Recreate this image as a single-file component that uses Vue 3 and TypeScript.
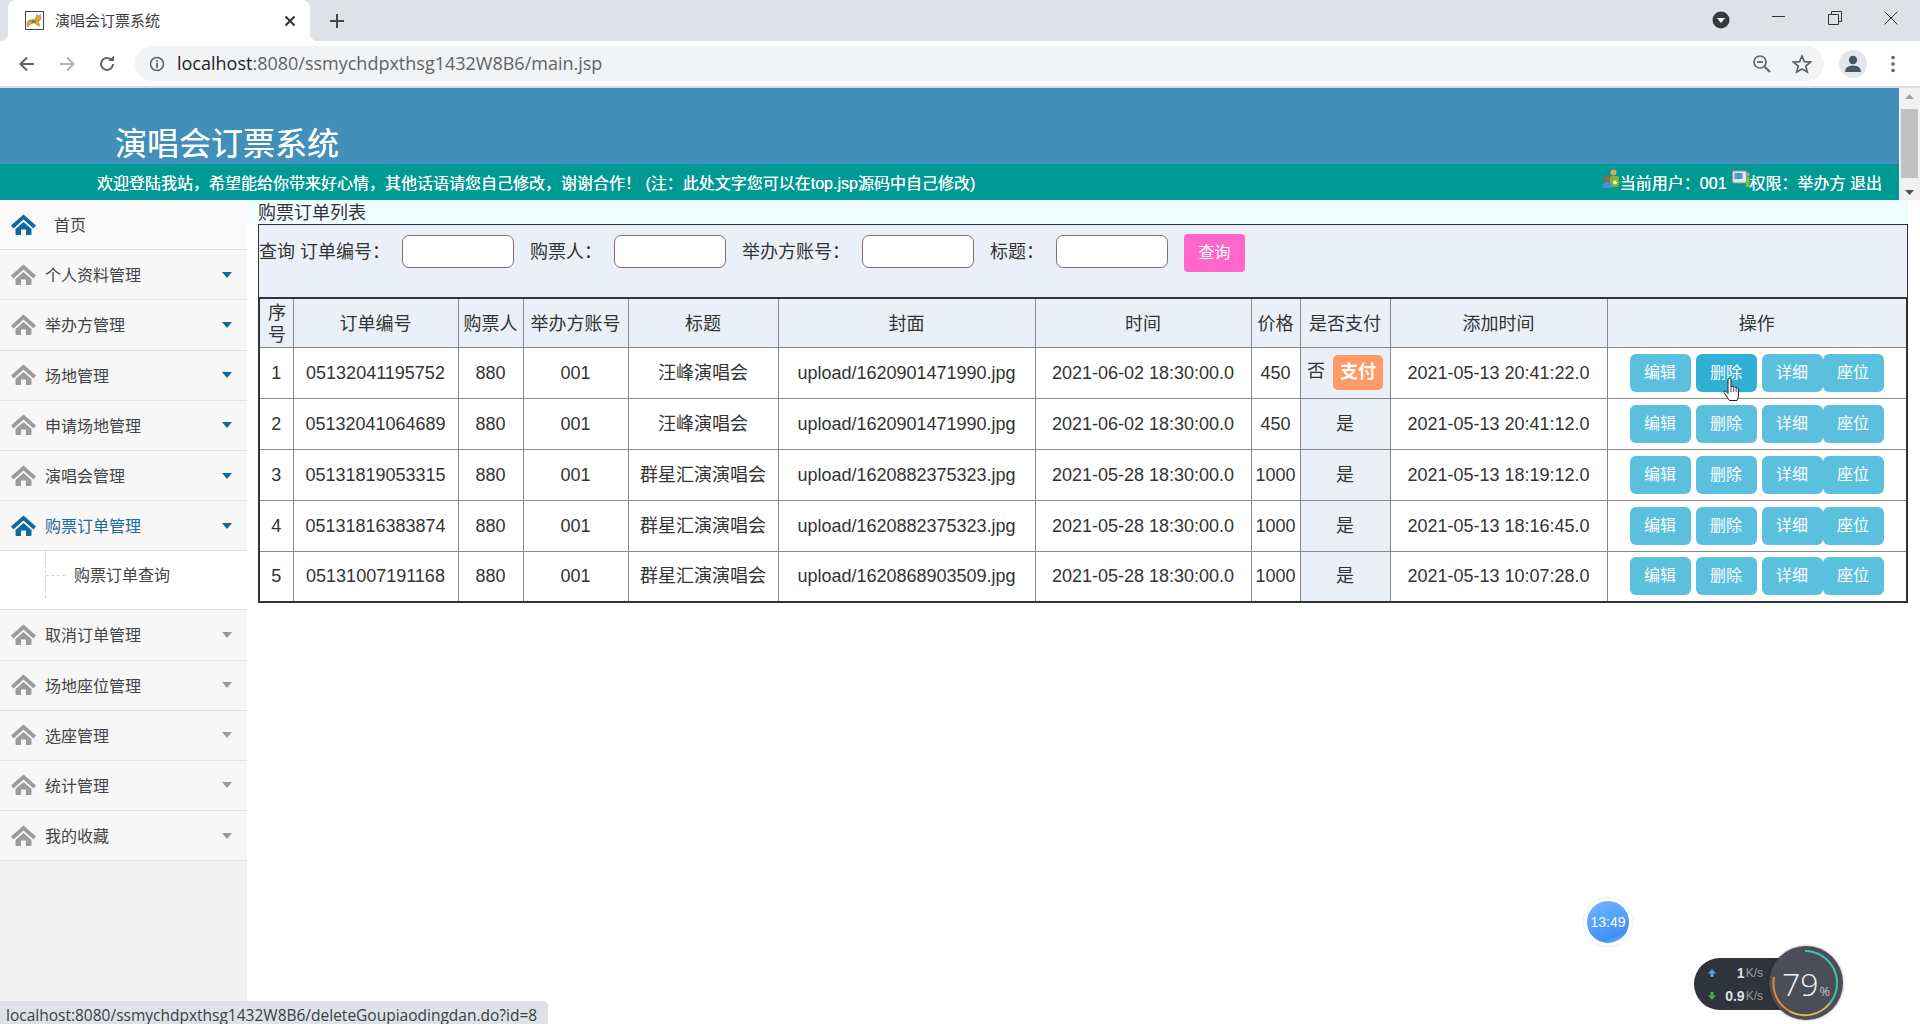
<script setup lang="ts">
interface Order {
  no: number
  code: string
  title: string
  cover: string
  time: string
  price: string
  paid: boolean
  added: string
}
const menus = ['个人资料管理', '举办方管理', '场地管理', '申请场地管理', '演唱会管理']
const menusAfter = ['取消订单管理', '场地座位管理', '选座管理', '统计管理', '我的收藏']
const headers = ['序号', '订单编号', '购票人', '举办方账号', '标题', '封面', '时间', '价格', '是否支付', '添加时间', '操作']
const widths = [34, 165, 65, 105, 150, 257, 216, 49, 90, 217, 300]
const orders: Order[] = [
  { no: 1, code: '05132041195752', title: '汪峰演唱会', cover: 'upload/1620901471990.jpg', time: '2021-06-02 18:30:00.0', price: '450', paid: false, added: '2021-05-13 20:41:22.0' },
  { no: 2, code: '05132041064689', title: '汪峰演唱会', cover: 'upload/1620901471990.jpg', time: '2021-06-02 18:30:00.0', price: '450', paid: true, added: '2021-05-13 20:41:12.0' },
  { no: 3, code: '05131819053315', title: '群星汇演演唱会', cover: 'upload/1620882375323.jpg', time: '2021-05-28 18:30:00.0', price: '1000', paid: true, added: '2021-05-13 18:19:12.0' },
  { no: 4, code: '05131816383874', title: '群星汇演演唱会', cover: 'upload/1620882375323.jpg', time: '2021-05-28 18:30:00.0', price: '1000', paid: true, added: '2021-05-13 18:16:45.0' },
  { no: 5, code: '05131007191168', title: '群星汇演演唱会', cover: 'upload/1620868903509.jpg', time: '2021-05-28 18:30:00.0', price: '1000', paid: true, added: '2021-05-13 10:07:28.0' },
]
const housePath = 'M12.5 0.5 L25 11.5 L22.5 14.5 L12.5 5.5 L2.5 14.5 L0 11.5 Z M4.5 15 L12.5 8 L20.5 15 V20 Q20.5 21 19.5 21 H15 V15.5 H10 V21 H5.5 Q4.5 21 4.5 20 Z'
</script>

<template>
  <div class="app">
    <div class="tabstrip">
      <div class="tab">
        <svg class="favicon" width="19" height="19" viewBox="0 0 19 19">
          <rect x="0.5" y="0.5" width="18" height="18" fill="#fff" stroke="#444" />
          <path d="M2 15 Q1.5 10 4.5 9 L10 8.5 L12 3.5 L13.5 5 L15.5 3.5 L16 8 L13 11 L15 14.5 L12.5 14.5 L10 12 L6 12.5 L4 14.5 L3 16 Z" fill="#d9a441" stroke="#9a6a28" stroke-width="0.5" />
          <path d="M6 10 L10 9.5 L11 11 L7 11.5 Z" fill="#6e5a30" />
        </svg>
        <span class="tab-title">演唱会订票系统</span>
        <svg class="tab-x" width="12" height="12" viewBox="0 0 12 12"><path d="M1.5 1.5 L10.5 10.5 M10.5 1.5 L1.5 10.5" stroke="#333" stroke-width="2" /></svg>
      </div>
      <svg class="plus" width="16" height="16" viewBox="0 0 16 16"><path d="M8 1 V15 M1 8 H15" stroke="#45474a" stroke-width="2" /></svg>
      <div class="winctl">
        <svg class="media" width="18" height="18" viewBox="0 0 18 18"><circle cx="9" cy="9" r="8.5" fill="#36393d" /><path d="M5 7 H13 L9 12 Z" fill="#fff" /></svg>
        <svg class="win" width="14" height="14" viewBox="0 0 14 14"><path d="M0 5.5 H13" stroke="#333" stroke-width="1" /></svg>
        <svg class="win" width="14" height="14" viewBox="0 0 14 14"><path d="M0.5 3.5 H10.5 V13.5 H0.5 Z M3.5 3.5 V0.5 H13.5 V10.5 H10.5" fill="none" stroke="#333" /></svg>
        <svg class="win" width="14" height="14" viewBox="0 0 14 14"><path d="M0.5 0.5 L13.5 13.5 M13.5 0.5 L0.5 13.5" stroke="#333" /></svg>
      </div>
    </div>

    <div class="toolbar">
      <svg class="nav" width="18" height="18" viewBox="0 0 18 18"><path d="M16 9 H3 M9 2.5 L2.5 9 L9 15.5" fill="none" stroke="#5f6368" stroke-width="2" /></svg>
      <svg class="nav" width="18" height="18" viewBox="0 0 18 18"><path d="M2 9 H15 M9 2.5 L15.5 9 L9 15.5" fill="none" stroke="#b4b6b9" stroke-width="2" /></svg>
      <svg class="nav" width="18" height="18" viewBox="0 0 18 18"><path d="M15 9 A6 6 0 1 1 13 4.5" fill="none" stroke="#5f6368" stroke-width="2" /><path d="M10 6 H16 V0.5 Z" fill="#5f6368" /></svg>
      <div class="omnibox">
        <svg width="16" height="16" viewBox="0 0 16 16"><circle cx="8" cy="8" r="6.5" fill="none" stroke="#5f6368" stroke-width="1.6" /><path d="M8 7 V12 M8 4 V5.8" stroke="#5f6368" stroke-width="1.8" /></svg>
        <span class="url"><span class="host">localhost</span>:8080/ssmychdpxthsg1432W8B6/main.jsp</span>
        <svg class="om-zoom" width="20" height="20" viewBox="0 0 20 20"><circle cx="8" cy="8" r="6" fill="none" stroke="#5f6368" stroke-width="1.7" /><path d="M5 8 H11" stroke="#5f6368" stroke-width="1.7" /><path d="M12.5 12.5 L18 18" stroke="#5f6368" stroke-width="2" /></svg>
        <svg class="om-star" width="20" height="20" viewBox="0 0 20 20"><path d="M10 2 L12.4 7.6 L18.5 8.1 L13.8 12.1 L15.3 18 L10 14.9 L4.7 18 L6.2 12.1 L1.5 8.1 L7.6 7.6 Z" fill="none" stroke="#5f6368" stroke-width="1.7" /></svg>
      </div>
      <div class="avatar">
        <svg width="18" height="18" viewBox="0 0 18 18"><circle cx="9" cy="5" r="4.2" fill="#4a5568" /><path d="M1 17 Q1 10.5 9 10.5 Q17 10.5 17 17 Z" fill="#4a5568" /></svg>
      </div>
      <svg class="kebab" width="6" height="18" viewBox="0 0 6 18"><circle cx="3" cy="2.5" r="1.8" fill="#5f6368" /><circle cx="3" cy="9" r="1.8" fill="#5f6368" /><circle cx="3" cy="15.5" r="1.8" fill="#5f6368" /></svg>
    </div>

    <div class="topframe">
      <div class="topcontent">
        <div class="brand"><span class="brand-text">演唱会订票系统</span></div>
        <div class="notice">
          <span class="notice-left">欢迎登陆我站，希望能给你带来好心情，其他话语请您自己修改，谢谢合作！ (注：此处文字您可以在top.jsp源码中自己修改)</span>
          <span class="notice-right">
            <svg class="users" width="18" height="20" viewBox="0 0 18 20"><circle cx="11.5" cy="3.5" r="3" fill="#e6a64c" /><rect x="8" y="7" width="9" height="11" rx="2" fill="#7fb23a" /><circle cx="5" cy="10" r="3" fill="#a8623a" /><path d="M0 19 Q0 13 5 13 Q10 13 10 19 Z" fill="#4a8fd8" /><circle cx="13" cy="13.5" r="2" fill="#e8f5d0" /></svg>
            <span>当前用户：001</span>
            <svg class="perm" width="18" height="18" viewBox="0 0 18 18"><rect x="0.5" y="1" width="14" height="12" rx="1.5" fill="#dfe5ea" stroke="#8e99a3" /><rect x="2.5" y="3" width="8" height="6" fill="#4f9ad6" /><rect x="14" y="7" width="3.5" height="10" fill="#8fb92e" /><circle cx="15.7" cy="4.5" r="2" fill="#9aa7ad" /></svg>
            <span>权限：举办方 退出</span>
          </span>
        </div>
      </div>
      <div class="scrollbar">
        <svg width="21" height="16" viewBox="0 0 21 16"><path d="M6 11 L10.5 6 L15 11 Z" fill="#a3a3a3" /></svg>
        <div class="thumb"></div>
        <svg width="21" height="16" viewBox="0 0 21 16"><path d="M6 6 L15 6 L10.5 11 Z" fill="#505050" /></svg>
      </div>
    </div>

    <div class="body">
      <aside class="sidebar">
        <div class="item home">
          <svg class="house on" width="25" height="21" viewBox="0 0 25 21"><path :d="housePath" /></svg>
          <span class="home-label">首页</span>
        </div>
        <div v-for="m in menus" :key="m" class="item">
          <svg class="house" width="25" height="21" viewBox="0 0 25 21"><path :d="housePath" /></svg>
          <span class="label">{{ m }}</span>
          <span class="caret"></span>
        </div>
        <div class="item active">
          <svg class="house on" width="25" height="21" viewBox="0 0 25 21"><path :d="housePath" /></svg>
          <span class="label">购票订单管理</span>
          <span class="caret"></span>
        </div>
        <div class="submenu">
          <span class="tree"><span class="tree-h"></span></span>
          <span class="sub-label">购票订单查询</span>
        </div>
        <div v-for="m in menusAfter" :key="m" class="item">
          <svg class="house" width="25" height="21" viewBox="0 0 25 21"><path :d="housePath" /></svg>
          <span class="label">{{ m }}</span>
          <span class="caret muted"></span>
        </div>
      </aside>

      <main class="main">
        <div class="crumb">购票订单列表</div>
        <div class="content">
          <div class="search">
            <span>查询 订单编号：</span>
            <input class="inp" type="text" />
            <span class="lab">购票人：</span>
            <input class="inp" type="text" />
            <span class="lab">举办方账号：</span>
            <input class="inp" type="text" />
            <span class="lab">标题：</span>
            <input class="inp" type="text" />
            <button class="query" type="button">查询</button>
          </div>
          <table class="grid">
            <colgroup>
              <col v-for="(w, i) in widths" :key="i" :style="{ width: w + 'px' }" />
            </colgroup>
            <thead>
              <tr>
                <th v-for="h in headers" :key="h">{{ h }}</th>
              </tr>
            </thead>
            <tbody>
              <tr v-for="o in orders" :key="o.code">
                <td>{{ o.no }}</td>
                <td>{{ o.code }}</td>
                <td>880</td>
                <td>001</td>
                <td>{{ o.title }}</td>
                <td>{{ o.cover }}</td>
                <td>{{ o.time }}</td>
                <td>{{ o.price }}</td>
                <td class="paycell">
                  <template v-if="o.paid">是</template>
                  <template v-else>否 <a class="pay">支付</a></template>
                </td>
                <td>{{ o.added }}</td>
                <td>
                  <div class="ops">
                    <a class="op">编辑</a>
                    <a class="op" :class="{ hover: o.no === 1 }">删除</a>
                    <a class="op">详细</a>
                    <a class="op last">座位</a>
                  </div>
                </td>
              </tr>
            </tbody>
          </table>
        </div>
      </main>

      <svg class="cursor" width="20" height="25" viewBox="0 0 20 25">
        <path d="M6 2 Q8 0.5 9 2.5 V10 Q10 8.5 11.5 10 Q13 9 14 10.8 Q15.5 10 16.5 12 V18 Q16.5 21 15 23.5 H7.5 L2 15.5 Q1.5 13.5 3.5 14 L6 16.5 Z" fill="#fff" stroke="#222" stroke-width="1" stroke-linejoin="round" />
        <path d="M9 10 V15 M11.7 10.5 V15 M14.2 11 V15" stroke="#222" stroke-width="0.8" />
      </svg>

      <div class="clock">13:49</div>

      <div class="meter">
        <div class="pill">
          <div class="rate"><svg width="10" height="10" viewBox="0 0 10 10"><path d="M5 1 L9 5.5 H6.5 V9 H3.5 V5.5 H1 Z" fill="#3fa9e0" /></svg><span class="val">1</span><span class="unit">K/s</span></div>
          <div class="rate"><svg width="10" height="10" viewBox="0 0 10 10"><path d="M5 9 L9 4.5 H6.5 V1 H3.5 V4.5 H1 Z" fill="#3ab54a" /></svg><span class="val">0.9</span><span class="unit">K/s</span></div>
        </div>
        <div class="dial">
          <svg class="dial-arc" width="74" height="74" viewBox="0 0 74 74">
            <path d="M36 5 A32 32 0 0 1 61 57" fill="none" stroke="#3cc5a8" stroke-width="2" />
            <path d="M61 57 A32 32 0 0 1 20 65" fill="none" stroke="#d8c34a" stroke-width="2" />
            <path d="M20 65 A32 32 0 0 1 5 31" fill="none" stroke="#e8893a" stroke-width="2" />
          </svg>
          <span class="pct">79<small>%</small></span>
        </div>
      </div>

      <div class="statusbar">localhost:8080/ssmychdpxthsg1432W8B6/deleteGoupiaodingdan.do?id=8</div>
    </div>
  </div>
</template>

<style>
html, body { margin: 0; padding: 0; overflow: hidden; background: #fff; }
</style>

<style scoped>
.app {
  width: 1920px;
  height: 1024px;
  display: flex;
  flex-direction: column;
  overflow: hidden;
  font-family: "Liberation Sans", "Noto Sans CJK SC", sans-serif;
  color: #333;
  font-size: 18px;
}
.tabstrip {
  height: 41px;
  background: #dee1e6;
  display: flex;
  align-items: center;
  flex: none;
}
.tab {
  position: relative;
  width: 302px;
  height: 41px;
  margin-left: 8px;
  background: #fff;
  border-radius: 8px 8px 0 0;
  display: flex;
  align-items: center;
  box-sizing: border-box;
  padding: 0 14px 0 17px;
  margin-right: 19px;
}
.tab::before, .tab::after {
  content: "";
  position: absolute;
  bottom: 0;
  width: 8px;
  height: 8px;
}
.tab::before { left: -8px; background: radial-gradient(circle at 0 0, transparent 8px, #fff 8.5px); }
.tab::after { right: -8px; background: radial-gradient(circle at 100% 0, transparent 8px, #fff 8.5px); }
.favicon { flex: none; }
.tab-title { margin-left: 11px; margin-top: -2px; font-size: 15px; color: #3c4043; font-family: "Noto Sans CJK SC", sans-serif; flex: 1; }
.tab-x { flex: none; }
.plus { flex: none; }
.winctl { margin-left: auto; display: flex; align-items: center; padding-right: 22px; }
.media { margin-top: -2px; }
.win { margin-left: 42px; margin-top: -6px; }
.toolbar {
  height: 45px;
  flex: none;
  background: #fff;
  border-bottom: 2px solid #dadce0;
  display: flex;
  align-items: center;
  padding-left: 18px;
  gap: 22px;
}
.nav { flex: none; }
.omnibox {
  width: 1689px;
  height: 35px;
  background: #f1f3f4;
  border-radius: 18px;
  display: flex;
  align-items: center;
  box-sizing: border-box;
  padding: 0 12px 0 14px;
  margin-left: -3px;
}
.url { margin-left: 12px; margin-top: -2px; font-family: "Open Sans", sans-serif; font-size: 18px; color: #5f6368; flex: 1; }
.host { color: #202124; }
.om-star { margin-left: 20px; }
.avatar {
  width: 28px;
  height: 28px;
  border-radius: 50%;
  background: #e3e6ea;
  display: flex;
  align-items: center;
  justify-content: center;
  margin-left: -7px;
  flex: none;
}
.kebab { margin-left: 1px; flex: none; }

.topframe { height: 112px; flex: none; display: flex; }
.topcontent { width: 1899px; display: flex; flex-direction: column; }
.brand { height: 76px; background: #428fb9; position: relative; }
.brand-text {
  position: absolute;
  left: 115px;
  top: 31px;
  font-size: 32px;
  line-height: 44px;
  color: #fff;
  text-shadow: 0 0 0.6px #fff;
  font-family: "Noto Sans CJK SC", sans-serif;
}
.notice {
  height: 36px;
  background: #009994;
  display: flex;
  align-items: center;
  justify-content: space-between;
  padding: 0 17px 0 97px;
  color: #fff;
  font-size: 16px;
  text-shadow: 0 0 0.5px #fff;
}
.notice-left { white-space: nowrap; }
.notice-right { display: flex; align-items: center; white-space: nowrap; }
.users { margin-top: -6px; }
.perm { margin-left: 5px; margin-top: -6px; }
.scrollbar { width: 21px; background: #f1f1f1; display: flex; flex-direction: column; align-items: center; }
.thumb { width: 17px; height: 69px; margin: 5px 0; background: #c1c1c1; flex: none; }
.scrollbar svg { flex: none; }
.scrollbar svg:last-child { margin-top: 1px; }

.body { flex: 1; display: flex; position: relative; min-height: 0; }
.sidebar {
  width: 247px;
  flex: none;
  background: #f1f1f1;
  font-size: 16px;
}
.item {
  height: 50.2px;
  box-sizing: border-box;
  border-bottom: 1px solid #dfdfdf;
  background: #f7f7f7;
  display: flex;
  align-items: center;
  padding: 0 15px 1px 11px;
}
.item.home { background: #fafafa; }
.house { flex: none; fill: #9b9b9b; }
.house.on { fill: #10689f; }
.label { margin-left: 9px; flex: 1; color: #444; }
.home-label { margin-left: 18px; color: #444; }
.active .label { color: #23699b; }
.caret {
  width: 0;
  height: 0;
  margin-top: 1px;
  border-left: 5px solid transparent;
  border-right: 5px solid transparent;
  border-top: 6px solid #10689f;
}
.caret.muted { border-top-color: #9b9b9b; }
.submenu {
  height: 59px;
  box-sizing: border-box;
  background: #fff;
  border-bottom: 1px solid #dfdfdf;
  display: flex;
  align-items: center;
  position: relative;
}
.tree {
  width: 1px;
  height: 47px;
  margin: -12px 0 0 45px;
  border-left: 1px dashed #d5d5d5;
  position: relative;
}
.tree-h { position: absolute; left: 0; top: 24px; width: 19px; border-top: 1px dashed #d5d5d5; }
.sub-label { margin-left: 27px; margin-top: -12px; color: #444; }

.main { width: 1661px; flex: none; }
.crumb { height: 24px; line-height: 26px; padding-left: 11px; background: #f0fdff; }
.content { padding-left: 11px; }
.search {
  height: 73px;
  box-sizing: border-box;
  background: #ebf0f8;
  border: 1px solid #333;
  border-bottom: none;
  display: flex;
  align-items: flex-start;
  padding-top: 10px;
  line-height: 34px;
  white-space: nowrap;
}
.search span { flex: none; }
.lab { margin-left: 16px; }
.lab + .inp, .search span:first-child + .inp { margin-left: 12px; }
.inp {
  width: 112px;
  height: 33px;
  box-sizing: border-box;
  border: 1px solid #8a6d6d;
  border-radius: 7px;
  background: #fff;
  padding: 0;
  flex: none;
}
.query {
  width: 61px;
  height: 38px;
  margin: -1px 0 0 16px;
  background: #ff66cc;
  border: none;
  border-radius: 4px;
  color: #fff;
  font: 16px/34px "Liberation Sans", "Noto Sans CJK SC", sans-serif;
  padding: 0;
}
.grid {
  width: 1648px;
  table-layout: fixed;
  border-collapse: collapse;
  border: 2px solid #333;
  background: #fff;
}
.grid th, .grid td {
  border: 1px solid #888;
  text-align: center;
  font-weight: normal;
  padding: 0;
  line-height: 22px;
  white-space: nowrap;
}
.grid th { padding-top: 2px; }
.grid th:first-child { white-space: normal; padding: 2px 8px 0; }
.grid thead tr { height: 49px; }
.grid tbody tr { height: 51px; }
.grid th { background: #ebf0f8; }
.grid .paycell { background: #ebf0f8; }
.pay {
  display: inline-block;
  width: 50px;
  height: 35px;
  line-height: 35px;
  background: #ff9966;
  color: #fff;
  font-weight: bold;
  border-radius: 5px;
  margin-left: 3px;
  vertical-align: middle;
}
.ops { display: flex; padding-left: 22px; }
.op {
  width: 61px;
  height: 38px;
  line-height: 38px;
  margin-right: 5px;
  border-radius: 6px;
  background: #5bc0de;
  color: #fff;
  font-size: 16px;
  flex: none;
}
.op:nth-child(3) { margin-right: 0; }
.op.hover { background: #31b0d5; }

.cursor { position: absolute; left: 1722px; top: 177px; }
.clock {
  position: absolute;
  left: 1584px;
  top: 698px;
  width: 48px;
  height: 48px;
  box-sizing: border-box;
  border: 3px solid #fff;
  box-shadow: 0 0 3px rgba(90, 140, 220, 0.35);
  border-radius: 50%;
  background: linear-gradient(160deg, #72b8ff 0%, #3f90f6 80%, #8cc4ff 100%);
  color: #fff;
  font-size: 14px;
  text-align: center;
  line-height: 42px;
}
.meter { position: absolute; left: 1694px; top: 746px; width: 150px; height: 76px; }
.pill {
  position: absolute;
  left: 0;
  top: 12px;
  width: 100px;
  height: 52px;
  box-sizing: border-box;
  background: #2f333c;
  border-radius: 26px 0 0 26px;
  padding: 3px 0 0 13px;
}
.rate { height: 23px; display: flex; align-items: center; color: #dfe1e5; width: 56px; }
.rate svg { flex: none; }
.val { margin-left: auto; font-size: 14px; font-weight: bold; }
.unit { font-size: 12px; color: #9a9da4; margin-left: 1px; }
.dial {
  position: absolute;
  left: 75px;
  top: 0;
  width: 74px;
  height: 74px;
  border-radius: 50%;
  background: #4b4e58;
  box-shadow: 0 0 3px rgba(0, 0, 0, 0.4);
  display: flex;
  align-items: center;
  justify-content: center;
}
.dial-arc { position: absolute; left: 0; top: 0; }
.pct { position: relative; color: #f2f2f2; font-size: 32px; font-weight: 300; font-family: "Open Sans", sans-serif; }
.pct small { font-size: 13px; margin-left: 1px; }
.statusbar {
  position: absolute;
  left: 0;
  bottom: 0;
  width: 548px;
  height: 23px;
  box-sizing: border-box;
  background: #dee1e6;
  border-radius: 0 5px 0 0;
  padding-left: 6px;
  font-family: "Open Sans", sans-serif;
  font-size: 15.5px;
  line-height: 29px;
  color: #3c4043;
  overflow: hidden;
  white-space: nowrap;
}
</style>
